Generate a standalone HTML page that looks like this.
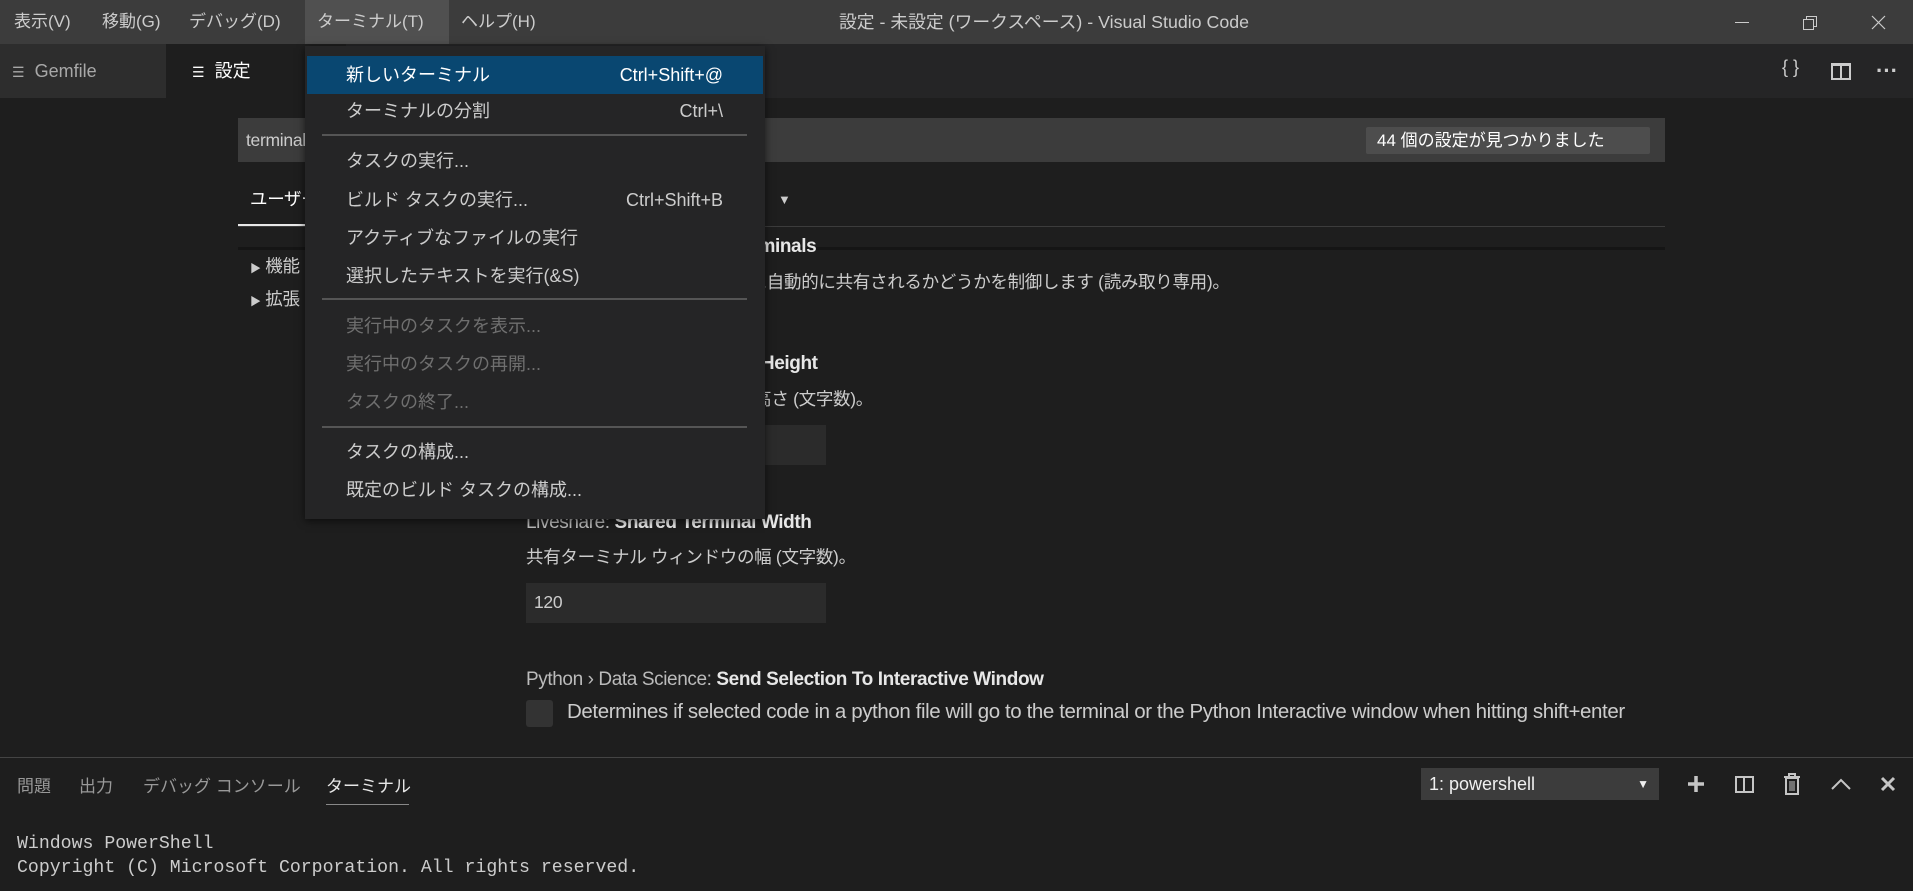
<!DOCTYPE html>
<html><head><meta charset="utf-8"><style>
*{margin:0;padding:0;box-sizing:border-box}
body{width:1913px;height:891px;overflow:hidden;background:#1e1e1e;font-family:"Liberation Sans","Noto Sans CJK JP",sans-serif;color:#ccc;position:relative}
.a{position:absolute;white-space:nowrap}
.mi{top:0;height:44px;line-height:44px;font-size:17px;color:#ccc}
.row{position:absolute;left:2px;width:456px;height:38px;line-height:38px;font-size:18px;color:#ccc;padding-left:39px}
.row .k{position:absolute;right:40px;top:0}
.dis{color:#6f6f6f}
.sep{position:absolute;left:17px;width:425px;height:2px;background:#555}
.t{font-size:17.5px;letter-spacing:-0.3px}
.h{font-size:19px;letter-spacing:-0.4px}
.e{font-size:20.5px;letter-spacing:-0.4px}
</style></head><body>
<!-- title bar -->
<div class="a" style="left:0;top:0;width:1913px;height:44px;background:#3c3c3c"></div>
<div class="a mi" style="left:14px">表示(V)</div>
<div class="a mi" style="left:102px">移動(G)</div>
<div class="a mi" style="left:189px">デバッグ(D)</div>
<div class="a mi" style="left:305px;width:144px;background:#505050;padding-left:12px">ターミナル(T)</div>
<div class="a mi" style="left:461px">ヘルプ(H)</div>
<div class="a mi" style="left:839px;font-size:17.8px">設定 - 未設定 (ワークスペース) - Visual Studio Code</div>
<div class="a" style="left:1735px;top:22px;width:14px;height:1px;background:#ccc"></div>
<div class="a" style="left:1806px;top:16px;width:11px;height:11px;border:1px solid #ccc"></div>
<div class="a" style="left:1803px;top:19px;width:11px;height:11px;border:1px solid #ccc;background:#3c3c3c"></div>
<svg class="a" style="left:1871px;top:15px" width="15" height="15"><path d="M1 1L14 14M14 1L1 14" stroke="#ccc" stroke-width="1.2"/></svg>
<!-- tabs -->
<div class="a" style="left:0;top:44px;width:1913px;height:54px;background:#252526"></div>
<div class="a" style="left:0;top:44px;width:166px;height:54px;background:#2d2d2d"></div>
<div class="a" style="left:166px;top:44px;width:180px;height:54px;background:#1e1e1e"></div>
<div class="a" style="left:12px;top:44px;line-height:54px;font-size:18px;color:#a8a8a8"><span style="font-size:14px">☰</span>&nbsp; Gemfile</div>
<div class="a" style="left:192px;top:44px;line-height:54px;font-size:18px;color:#fff"><span style="font-size:14px">☰</span>&nbsp; 設定</div>
<div class="a" style="left:1782px;top:57px;font-size:18px;color:#ccc">{ }</div>
<div class="a" style="left:1831px;top:63px;width:20px;height:17px;border:2px solid #ccc;border-top-width:3px"></div>
<div class="a" style="left:1840px;top:63px;width:2px;height:17px;background:#ccc"></div>
<div class="a" style="left:1876px;top:58px;font-size:22px;font-weight:bold;color:#ccc;letter-spacing:0px">···</div>
<!-- search -->
<div class="a" style="left:238px;top:118px;width:1427px;height:44px;background:#3c3c3c"></div>
<div class="a t" style="left:246px;top:118px;line-height:44px;color:#ccc">terminal</div>
<div class="a" style="left:1366px;top:127px;width:284px;height:27px;background:#4d4d4d;border-radius:2px;line-height:27px;font-size:17px;color:#fff;padding-left:11px">44 個の設定が見つかりました</div>
<!-- settings tabs -->
<div class="a t" style="left:250px;top:186px;color:#fff">ユーザー</div>
<div class="a" style="left:238px;top:224px;width:80px;height:2px;background:#e7e7e7"></div>
<div class="a" style="left:238px;top:226px;width:1427px;height:1px;background:#3c3c3c"></div>
<div class="a" style="left:778px;top:192px;font-size:13px;color:#ccc">▼</div>
<div class="a" style="left:238px;top:247px;width:1427px;height:3px;background:#151515"></div>
<div class="a t" style="left:250px;top:253px"><span style="font-size:11px">▶</span> 機能</div>
<div class="a t" style="left:250px;top:286px"><span style="font-size:11px">▶</span> 拡張</div>
<!-- settings items -->
<div class="a h" style="left:526px;top:236px;color:#e7e7e7;font-weight:bold">Liveshare: Allow Guest Terminals</div>
<div class="a t" style="left:526px;top:269px">共有ターミナルがゲストに常に自動的に共有されるかどうかを制御します (読み取り専用)。</div>
<div class="a h" style="left:526px;top:353px;color:#e7e7e7"><span style="color:#bbb">Liveshare: </span><b>Shared Terminal Height</b></div>
<div class="a t" style="left:526px;top:386px">共有ターミナル ウィンドウの高さ (文字数)。</div>
<div class="a" style="left:526px;top:425px;width:300px;height:40px;background:#2b2b2b"></div>
<div class="a h" style="left:526px;top:512px;color:#e7e7e7"><span style="color:#bbb">Liveshare: </span><b>Shared Terminal Width</b></div>
<div class="a t" style="left:526px;top:544px">共有ターミナル ウィンドウの幅 (文字数)。</div>
<div class="a" style="left:526px;top:583px;width:300px;height:40px;background:#2b2b2b"></div>
<div class="a t" style="left:534px;top:592px">120</div>
<div class="a h" style="left:526px;top:669px;color:#e7e7e7"><span style="color:#bbb">Python › Data Science: </span><b>Send Selection To Interactive Window</b></div>
<div class="a" style="left:526px;top:700px;width:27px;height:27px;background:#333;border-radius:3px"></div>
<div class="a e" style="left:567px;top:700px">Determines if selected code in a python file will go to the terminal or the Python Interactive window when hitting shift+enter</div>
<!-- panel -->
<div class="a" style="left:0;top:757px;width:1913px;height:1px;background:#444"></div>
<div class="a" style="left:17px;top:772px;font-size:17px;color:#999">問題</div>
<div class="a" style="left:79px;top:772px;font-size:17px;color:#999">出力</div>
<div class="a" style="left:143px;top:772px;font-size:17px;color:#999">デバッグ コンソール</div>
<div class="a" style="left:326px;top:772px;font-size:17px;color:#e7e7e7">ターミナル</div>
<div class="a" style="left:326px;top:804px;width:83px;height:1px;background:#888"></div>
<div class="a" style="left:1421px;top:768px;width:238px;height:32px;background:#3c3c3c;line-height:32px;font-size:18px;color:#f0f0f0;padding-left:8px">1: powershell<span style="position:absolute;right:10px;font-size:12px">▼</span></div>
<svg class="a" style="left:1687px;top:775px" width="18" height="18"><path d="M9 1V17M1 9H17" stroke="#c5c5c5" stroke-width="3.5"/></svg>
<div class="a" style="left:1735px;top:776px;width:19px;height:17px;border:2px solid #c5c5c5"></div>
<div class="a" style="left:1743px;top:776px;width:2px;height:17px;background:#c5c5c5"></div>
<svg class="a" style="left:1783px;top:773px" width="18" height="22"><path d="M1 4H17M6 4V1H12V4M3 5H15V21H3Z" stroke="#c5c5c5" stroke-width="2" fill="none"/><path d="M7 8V18M9 8V18M11 8V18" stroke="#c5c5c5" stroke-width="1"/></svg>
<svg class="a" style="left:1831px;top:777px" width="20" height="14"><path d="M1 12L10 3L19 12" stroke="#c5c5c5" stroke-width="2" fill="none"/></svg>
<svg class="a" style="left:1880px;top:776px" width="16" height="16"><path d="M2 2L14 14M14 2L2 14" stroke="#c5c5c5" stroke-width="3"/></svg>
<div class="a" style="left:17px;top:832px;font-family:'Liberation Mono',monospace;font-size:18.2px;line-height:24px;color:#ccc">Windows PowerShell<br>Copyright (C) Microsoft Corporation. All rights reserved.</div>
<!-- menu -->
<div class="a" style="left:305px;top:46px;width:460px;height:473px;background:#252526;box-shadow:0 2px 8px rgba(0,0,0,.6)">
<div class="row" style="top:10px;background:#094771;color:#fff">新しいターミナル<span class="k">Ctrl+Shift+@</span></div>
<div class="row" style="top:46px">ターミナルの分割<span class="k">Ctrl+\</span></div>
<div class="sep" style="top:88px"></div>
<div class="row" style="top:96px">タスクの実行...</div>
<div class="row" style="top:135px">ビルド タスクの実行...<span class="k">Ctrl+Shift+B</span></div>
<div class="row" style="top:173px">アクティブなファイルの実行</div>
<div class="row" style="top:211px">選択したテキストを実行(&amp;S)</div>
<div class="sep" style="top:252px"></div>
<div class="row dis" style="top:261px">実行中のタスクを表示...</div>
<div class="row dis" style="top:299px">実行中のタスクの再開...</div>
<div class="row dis" style="top:337px">タスクの終了...</div>
<div class="sep" style="top:380px"></div>
<div class="row" style="top:387px">タスクの構成...</div>
<div class="row" style="top:425px">既定のビルド タスクの構成...</div>
</div>
</body></html>
